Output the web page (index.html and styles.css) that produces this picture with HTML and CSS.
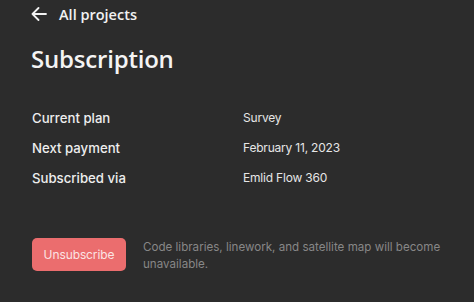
FILE: index.html
```html
<!DOCTYPE html>
<html>
<head>
<meta charset="utf-8">
<link rel="stylesheet" href="styles.css">
</head>
<body>
<div class="page">
  <a class="back">
    <svg class="back-icon" width="16" height="14" viewBox="0 0 16 14"><path d="M15 7H1.5M7.5 1L1.5 7l6 6" fill="none" stroke="#f2f2f2" stroke-width="1.8" stroke-linecap="round" stroke-linejoin="round"/></svg>
    <span>All projects</span>
  </a>
  <h1 class="title">Subscription</h1>
  <div class="details">
    <div class="label">Current plan</div><div class="value">Survey</div>
    <div class="label">Next payment</div><div class="value">February 11, 2023</div>
    <div class="label">Subscribed via</div><div class="value">Emlid Flow 360</div>
  </div>
  <div class="actions">
    <button class="btn">Unsubscribe</button>
    <p class="note">Code libraries, linework, and satellite map will become unavailable.</p>
  </div>
</div>
</body>
</html>
```
FILE: styles.css
```css
html, body {
  margin: 0;
  background: #2c2c2c;
}
body {
  font-family: Inter, "Liberation Sans", sans-serif;
  color: #f0f0f0;
}
.page {
  width: 474px;
  height: 302px;
  box-sizing: border-box;
  padding: 4px 0 0 31px;
}
.back {
  display: flex;
  align-items: center;
  gap: 12px;
  height: 20px;
  font-family: "Open Sans", sans-serif;
  font-weight: 600;
  font-size: 14.5px;
  color: #f2f2f2;
}
.back-icon { display: block; }
.title {
  margin: 20px 0 0 0;
  font-family: "Open Sans", sans-serif;
  font-weight: 600;
  font-size: 24px;
  letter-spacing: -0.2px;
  line-height: 30px;
  color: #f4f4f4;
}
.details {
  display: grid;
  grid-template-columns: 211px auto;
  row-gap: 12px;
  margin-top: 35px;
  padding-left: 1px;
  font-size: 13px;
  line-height: 18px;
}
.label { font-weight: 500; color: #eeeeee; font-size: 13.2px; }
.value { font-size: 12px; letter-spacing: -0.2px; color: #e6e6e6; }
.actions {
  display: flex;
  align-items: flex-start;
  gap: 17px;
  margin-top: 51px;
  padding-left: 1px;
}
.btn {
  flex: none;
  width: 94px;
  height: 33px;
  border: none;
  border-radius: 5px;
  background: #eb6d6e;
  color: #fbe4e4;
  font-family: Inter, sans-serif;
  font-size: 12px;
  letter-spacing: -0.1px;
}
.note {
  margin: 0;
  padding-top: 1px;
  width: 310px;
  font-size: 11.6px;
  line-height: 17px;
  color: #878787;
}
```
